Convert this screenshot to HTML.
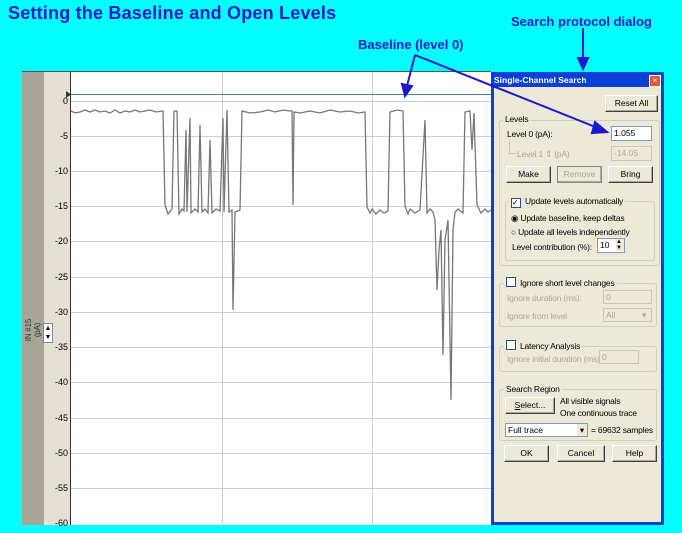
<!DOCTYPE html><html><head><style>
body{margin:0;width:682px;height:533px;background:#00ffff;position:relative;overflow:hidden;font-family:"Liberation Sans",sans-serif}
.a{position:absolute}
.t{color:#1a1acc;font-weight:bold}
.d{font-size:8.5px;color:#000;white-space:nowrap;letter-spacing:-0.2px}
.g{color:#aca899}
.btn{position:absolute;background:#ece9d8;border:1px solid;border-color:#fff #404040 #404040 #fff;box-shadow:inset -1px -1px #aca899;font-size:8.5px;text-align:center;box-sizing:border-box}
.box{position:absolute;border:1px solid #d0d0bf;border-radius:3px}
.inp{position:absolute;background:#fff;border:1px solid #7f9db9;font-size:8.5px;box-sizing:border-box;padding-left:2px}
.dis{background:#ece9d8;color:#aca899;border-color:#c9c7ba}
.cb{display:inline-block;width:8px;height:8px;border:1px solid #1c5180;background:#fff;vertical-align:-1px;margin-right:4px;font-size:8px;line-height:8px}
.lg{position:absolute;background:#ece9d8;font-size:8.5px;padding:0 2px;letter-spacing:-0.2px}
</style></head><body>
<div class="a t" style="left:8px;top:3px;font-size:18px;letter-spacing:0.2px">Setting the Baseline and Open Levels</div>
<div class="a t" style="left:511px;top:14px;font-size:13px">Search protocol dialog</div>
<div class="a t" style="left:358px;top:37px;font-size:13px">Baseline (level 0)</div>

<div class="a" style="left:22px;top:71px;width:22px;height:454px;background:#a8a497"></div>
<div class="a" style="left:44px;top:71px;width:26px;height:454px;background:#e4e1d4"></div>
<div class="a" style="left:70px;top:71px;width:421px;height:454px;background:#fff"></div>
<div class="a" style="left:22px;top:71px;width:469px;height:1px;background:#555"></div>
<div class="a d" style="transform:rotate(-90deg);transform-origin:0 0;font-size:8px;color:#333;line-height:9px;text-align:center;width:30px;top:345px;left:24px">IN #15<br>(pA)</div>
<div class="a" style="left:43px;top:323px;width:8px;height:18px;background:#fff;border:1px solid #888;font-size:7px;line-height:9px;text-align:center">▲<br>▼</div>

<svg class="a" style="left:0;top:0" width="682" height="533">
<g stroke="#d0d0d0" stroke-width="1">
<line x1="70" y1="136.5" x2="491" y2="136.5"/><line x1="70" y1="171.5" x2="491" y2="171.5"/><line x1="70" y1="206.5" x2="491" y2="206.5"/><line x1="70" y1="241.5" x2="491" y2="241.5"/><line x1="70" y1="277.5" x2="491" y2="277.5"/><line x1="70" y1="312.5" x2="491" y2="312.5"/><line x1="70" y1="347.5" x2="491" y2="347.5"/><line x1="70" y1="382.5" x2="491" y2="382.5"/><line x1="70" y1="418.5" x2="491" y2="418.5"/><line x1="70" y1="453.5" x2="491" y2="453.5"/><line x1="70" y1="488.5" x2="491" y2="488.5"/>
<line x1="222.5" y1="72" x2="222.5" y2="525"/><line x1="372.5" y1="72" x2="372.5" y2="525"/>
</g>
<line x1="70" y1="101.5" x2="491" y2="101.5" stroke="#b8d0e8"/>
<line x1="66" y1="94.5" x2="491" y2="94.5" stroke="#4a8a8a"/>
<polygon points="66,91 66,98 71,94.5" fill="#333"/>
<line x1="70.5" y1="72" x2="70.5" y2="525" stroke="#333"/>
<g fill="#000" font-size="9" font-family="Liberation Sans" text-anchor="end">
<text x="68" y="104">0</text><text x="68" y="139">-5</text><text x="68" y="174">-10</text><text x="68" y="209">-15</text><text x="68" y="244">-20</text><text x="68" y="280">-25</text><text x="68" y="315">-30</text><text x="68" y="350">-35</text><text x="68" y="385">-40</text><text x="68" y="421">-45</text><text x="68" y="456">-50</text><text x="68" y="491">-55</text><text x="68" y="526">-60</text>
</g>
<polyline fill="none" stroke="#777" stroke-width="1.3" points="71,111 75,113 80,112 85,110 90,112 95,110 100,112 105,111 110,113 115,110 120,113 125,111 130,112 135,110 140,112 145,111 150,110 156,112 163,111 165,205 168,214 172,209 174,111 177,111 179,214 182,209 184,211 186,130 187,212 190,118 191,213 195,209 198,212 200,125 202,212 205,209 208,213 210,140 212,213 216,209 220,211 223,118 224,212 227,110 229,212 232,210 233,310 235,212 240,210 242,111 250,113 260,112 268,110 275,112 283,110 290,111 292,111 293,205 294,112 300,113 310,111 320,113 330,110 340,112 350,111 358,113 365,112 367,207 370,213 372,209 376,214 380,210 384,213 388,211 390,112 397,110 403,111 405,206 408,214 410,209 415,213 420,210 425,120 427,213 430,209 433,212 435,220 437,290 439,250 441,230 443,355 445,240 448,220 451,400 453,230 455,212 458,209 463,213 465,112 470,111 472,150 474,113 477,205 481,213 485,209 488,212 491,210"/>
</svg>

<div class="a" style="left:491px;top:72px;width:173px;height:453px;background:#0b3fd6"></div>
<div class="a" style="left:494px;top:87px;width:167px;height:435px;background:#ece9d8"></div>
<div class="a" style="left:494px;top:75px;font-size:8.5px;color:#fff;font-weight:bold">Single-Channel Search</div>
<div class="a" style="left:649px;top:75px;width:10px;height:10px;background:#e05a3a;border:1px solid #fff;color:#fff;font-size:8px;line-height:10px;text-align:center">×</div>

<div class="btn" style="left:605px;top:95px;width:53px;height:17px;line-height:15px">Reset All</div>
<div class="box" style="left:499px;top:120px;width:159px;height:144px"></div>
<div class="lg" style="left:503px;top:114px">Levels</div>
<div class="a d" style="left:507px;top:129px">Level 0 (pA):</div>
<div class="inp" style="left:611px;top:126px;width:41px;height:15px;line-height:13px">1.055</div>
<div class="a d g" style="left:517px;top:149px">Level 1 ⇕ (pA)</div>
<div class="a" style="left:509px;top:140px;width:6px;height:13px;border-left:1px solid #c9c7ba;border-bottom:1px solid #c9c7ba"></div>
<div class="inp dis" style="left:611px;top:146px;width:41px;height:15px;line-height:13px">-14.05</div>
<div class="btn" style="left:506px;top:166px;width:45px;height:17px;line-height:15px">Make</div>
<div class="btn g" style="left:557px;top:166px;width:45px;height:17px;line-height:15px;border:1px solid #888">Remove</div>
<div class="btn" style="left:608px;top:166px;width:45px;height:17px;line-height:15px">Bring</div>
<div class="box" style="left:505px;top:201px;width:148px;height:58px"></div>
<div class="lg" style="left:509px;top:196px"><span class="cb">✓</span>Update levels automatically</div>
<div class="a d" style="left:511px;top:213px">◉ Update baseline, keep deltas</div>
<div class="a d" style="left:511px;top:227px">○ Update all levels independently</div>
<div class="a d" style="left:512px;top:242px">Level contribution (%):</div>
<div class="inp" style="left:597px;top:238px;width:28px;height:15px;line-height:13px">10 <span style="float:right;background:#ece9d8;width:8px;font-size:6px;line-height:6px">▲<br>▼</span></div>

<div class="box" style="left:499px;top:283px;width:156px;height:42px"></div>
<div class="lg" style="left:504px;top:277px"><span class="cb"></span>Ignore short level changes</div>
<div class="a d g" style="left:507px;top:293px">Ignore duration (ms):</div>
<div class="inp dis" style="left:603px;top:290px;width:49px;height:14px;line-height:12px">0</div>
<div class="a d g" style="left:507px;top:311px">Ignore from level</div>
<div class="inp dis" style="left:603px;top:308px;width:49px;height:14px;line-height:12px">All<span style="float:right;width:9px">▾</span></div>

<div class="box" style="left:499px;top:346px;width:156px;height:24px"></div>
<div class="lg" style="left:504px;top:340px"><span class="cb"></span>Latency Analysis</div>
<div class="a d g" style="left:507px;top:354px">Ignore initial duration (ms):</div>
<div class="inp dis" style="left:599px;top:350px;width:40px;height:14px;line-height:12px">0</div>

<div class="box" style="left:499px;top:389px;width:156px;height:50px"></div>
<div class="lg" style="left:504px;top:384px">Search Region</div>
<div class="btn" style="left:505px;top:397px;width:50px;height:17px;line-height:15px"><u>S</u>elect...</div>
<div class="a d" style="left:560px;top:396px">All visible signals</div>
<div class="a d" style="left:560px;top:408px">One continuous trace</div>
<div class="inp" style="left:505px;top:423px;width:83px;height:14px;line-height:12px">Full trace<span style="float:right;width:10px;background:#ece9d8;text-align:center">▾</span></div>
<div class="a d" style="left:591px;top:425px">= 69632 samples</div>

<div class="btn" style="left:504px;top:445px;width:45px;height:17px;line-height:15px">OK</div>
<div class="btn" style="left:557px;top:445px;width:48px;height:17px;line-height:15px">Cancel</div>
<div class="btn" style="left:612px;top:445px;width:45px;height:17px;line-height:15px">Help</div>

<svg class="a" style="left:0;top:0" width="682" height="533">
<g stroke="#1a1acc" stroke-width="2" fill="#1a1acc">
<line x1="415" y1="55" x2="407" y2="86"/><polygon points="402,84 412,86 405,96"/>
<line x1="415" y1="55" x2="598" y2="128"/><polygon points="595,122 592,133 607,132"/>
<line x1="583" y1="28" x2="583" y2="60"/><polygon points="578,58 588,58 583,69"/>
</g>
</svg>
</body></html>
